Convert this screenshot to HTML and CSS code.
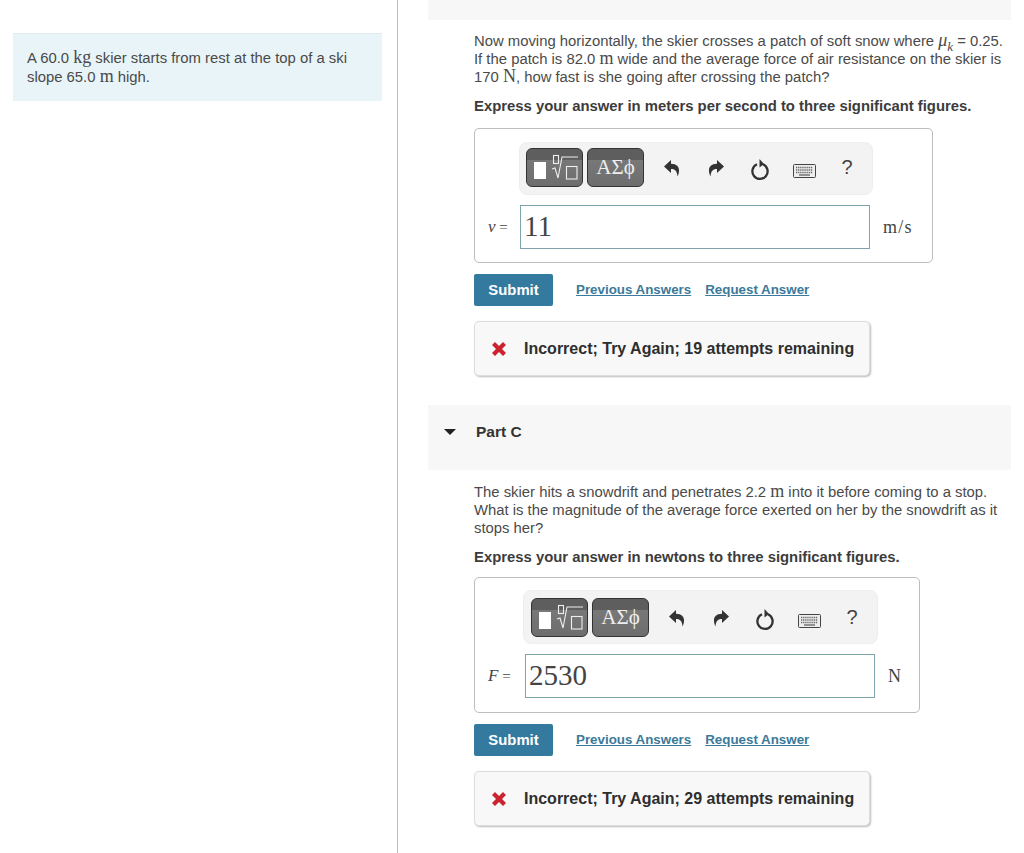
FILE: index.html
```html
<!DOCTYPE html>
<html lang="en">
<head>
  <meta charset="UTF-8" />
  <title>Skier problem</title>
  <link rel="stylesheet" href="styles.css">
</head>
<body>
  <svg class="icon-defs" aria-hidden="true">
    <symbol id="i-undo" viewBox="0 0 16 18"><path d="M7 1 0 7.500 7 14v-4c3.500 0 6 1.200 6.500 7.500C16.500 11 15.500 5 7 4.800z"/></symbol>
    <symbol id="i-redo" viewBox="0 0 16 18"><path d="M9 1l7 6.500L9 14v-4c-3.500 0-6 1.200-6.500 7.500C-.5 11 .5 5 9 4.800z"/></symbol>
    <symbol id="i-reload" viewBox="0 0 20 22"><path d="M13 5.300a7.600 7.600 0 1 1-6 0" fill="none" stroke="#333" stroke-width="2.300"/><path d="M9.500 0l4.500 5-4.500 3.500z" fill="#333"/></symbol>
    <symbol id="i-keys" viewBox="0 0 23 14"><rect x=".5" y=".5" width="22" height="13" rx="1" fill="#eee" stroke="#444"/><path d="M3 3.500h17M3 6h17M3 8.500h17" stroke="#666" stroke-width="1.300" stroke-dasharray="1.300 .8"/><path d="M6 11h11" stroke="#555" stroke-width="1.200"/></symbol>
    <symbol id="i-templates" viewBox="0 0 57 39"><rect x="8" y="14" width="12" height="17" fill="#fff"/><g fill="none" stroke="#eee" stroke-width="1.100"><rect x="27.500" y="7.500" width="5" height="8"/><path d="M26 21l3-1 3 10 4-21h16"/><rect x="40.500" y="18.500" width="10.500" height="12.500"/></g></symbol>
    <symbol id="i-cross" viewBox="0 0 16 16"><path d="M1 4l3-3 4 4 4-4 3 3-4 4 4 4-3 3-4-4-4 4-3-3 4-4z"/></symbol>
  </svg>

  <div class="page">
    <aside class="intro-col">
      <div class="intro">A 60.0 <span class="unit-m">kg</span> skier starts from rest at the top of a ski slope 65.0 <span class="unit-m">m</span> high.</div>
    </aside>

    <main class="parts-col">
      <div class="part-band part-band-top"></div>
      <section class="part-body">
        <p class="question">Now moving horizontally, the skier crosses a patch of soft snow where <i class="mu">μ<sub>k</sub></i> = 0.25. If the patch is 82.0 <span class="unit-m">m</span> wide and the average force of air resistance on the skier is 170 <span class="unit-m">N</span>, how fast is she going after crossing the patch?</p>
        <p class="instruction">Express your answer in meters per second to three significant figures.</p>

        <div class="answer-box box-b">
          <div class="toolbar">
            <button class="tool-btn"><svg width="57" height="39"><use href="#i-templates"/></svg></button>
            <button class="tool-btn tool-greek">ΑΣϕ</button>
            <span class="tool"><svg class="ic-arrow"><use href="#i-undo"/></svg></span>
            <span class="tool"><svg class="ic-arrow"><use href="#i-redo"/></svg></span>
            <span class="tool"><svg class="ic-reload"><use href="#i-reload"/></svg></span>
            <span class="tool"><svg class="ic-keys"><use href="#i-keys"/></svg></span>
            <span class="tool tool-help">?</span>
          </div>
          <div class="answer-row">
            <label class="var"><i>v</i> =</label>
            <input class="answer-input" type="text" value="11" />
            <span class="unit unit-wide">m/s</span>
          </div>
        </div>

        <div class="actions">
          <button class="submit">Submit</button>
          <a class="link link-first" href="#">Previous Answers</a>
          <a class="link" href="#">Request Answer</a>
        </div>
        <div class="feedback">
          <svg class="ic-cross"><use href="#i-cross"/></svg>
          <span>Incorrect; Try Again; 19 attempts remaining</span>
        </div>
      </section>

      <div class="part-band part-band-title">
        <span class="caret"></span>
        <span class="part-title">Part C</span>
      </div>
      <section class="part-body">
        <p class="question question-c">The skier hits a snowdrift and penetrates 2.2 <span class="unit-m">m</span> into it before coming to a stop. What is the magnitude of the average force exerted on her by the snowdrift as it stops her?</p>
        <p class="instruction">Express your answer in newtons to three significant figures.</p>

        <div class="answer-box box-c">
          <div class="toolbar">
            <button class="tool-btn"><svg width="57" height="39"><use href="#i-templates"/></svg></button>
            <button class="tool-btn tool-greek">ΑΣϕ</button>
            <span class="tool"><svg class="ic-arrow"><use href="#i-undo"/></svg></span>
            <span class="tool"><svg class="ic-arrow"><use href="#i-redo"/></svg></span>
            <span class="tool"><svg class="ic-reload"><use href="#i-reload"/></svg></span>
            <span class="tool"><svg class="ic-keys"><use href="#i-keys"/></svg></span>
            <span class="tool tool-help">?</span>
          </div>
          <div class="answer-row">
            <label class="var"><i>F</i> =</label>
            <input class="answer-input" type="text" value="2530" />
            <span class="unit">N</span>
          </div>
        </div>

        <div class="actions">
          <button class="submit">Submit</button>
          <a class="link link-first" href="#">Previous Answers</a>
          <a class="link" href="#">Request Answer</a>
        </div>
        <div class="feedback">
          <svg class="ic-cross"><use href="#i-cross"/></svg>
          <span>Incorrect; Try Again; 29 attempts remaining</span>
        </div>
      </section>
    </main>
  </div>
</body>
</html>
```

FILE: styles.css
```css
* {
  box-sizing: border-box;
}

html, body {
  margin: 0;
  height: 853px;
  overflow: hidden;
  background: #fff;
}

body {
  font-family: "Liberation Sans", Arial, sans-serif;
  font-size: 14.85px;
  color: #4a4a4a;
}

.icon-defs {
  display: none;
}

.page {
  display: flex;
  height: 853px;
}

.intro-col {
  width: 398px;
  flex: none;
  padding: 33px 15px 0 13px;
  border-right: 1px solid #aebfd4;
}

.intro {
  padding: 15px 14px 14px;
  line-height: 19px;
  background: #e8f4f7;
  border-top: 1px solid #dfeaee;
}

.unit-m {
  font-family: "Liberation Serif", serif;
  font-size: 18px;
  line-height: 0;
}

.parts-col {
  width: 583px;
  margin-left: 30px;
  flex: none;
}

.part-band {
  background: #f7f7f7;
}

.part-band-top {
  height: 20px;
}

.part-band-title {
  display: flex;
  align-items: flex-start;
  height: 65px;
  margin-top: 29px;
  padding: 18px 0 0 16px;
}

.caret {
  width: 0;
  height: 0;
  margin: 6px 20px 0 0;
  border-left: 6px solid transparent;
  border-right: 6px solid transparent;
  border-top: 6px solid #222;
}

.part-title {
  font-size: 15.5px;
  font-weight: bold;
  line-height: 18px;
  color: #333;
}

.part-body {
  padding-left: 46px;
}

.question {
  margin: 0;
  padding-top: 12px;
  line-height: 18px;
}

.question-c {
  padding-top: 13px;
}

.mu {
  font-family: "Liberation Serif", serif;
  font-size: 18px;
  line-height: 0;
}

.mu sub {
  font-size: 13px;
  line-height: 0;
}

.instruction {
  margin: 11px 0;
  line-height: 18px;
  font-weight: bold;
  color: #3c3c3c;
}

.answer-box {
  border: 1px solid #bdbdbd;
  border-radius: 5px;
}

.box-b {
  width: 459px;
  margin-top: 13px;
  padding: 13px 0 13px 13px;
}

.box-c {
  width: 446px;
  padding: 12px 0 14px 13px;
}

.toolbar {
  display: flex;
  align-items: flex-start;
  height: 53px;
  padding: 5px 0 0 6px;
  background: #f3f3f3;
  border: 1px solid #eee;
  border-radius: 8px;
}

.box-b .toolbar {
  width: 354px;
  margin-left: 31px;
}

.box-c .toolbar {
  width: 355px;
  height: 54px;
  margin-left: 35px;
  padding: 7px 0 0 7px;
}

.tool-btn {
  width: 57px;
  height: 39px;
  margin-right: 4px;
  padding: 0;
  border: 1px solid #333;
  border-radius: 6px;
  background: linear-gradient(#5e5e5e 0, #5e5e5e 30%, #787878 30%, #6d6d6d 100%);
  overflow: hidden;
}

.tool-btn svg {
  display: block;
  margin: -1px;
}

.tool-greek {
  margin-right: 6px;
  font-family: "Liberation Serif", serif;
  font-size: 21px;
  color: #eee;
}

.tool {
  display: flex;
  align-items: center;
  justify-content: center;
  width: 44px;
  height: 39px;
  fill: #333;
}

.ic-arrow {
  width: 16px;
  height: 18px;
}

.ic-reload {
  width: 20px;
  height: 22px;
  margin-top: 4px;
}

.ic-keys {
  width: 23px;
  height: 14px;
  margin-top: 7px;
}

.tool-help {
  padding-right: 2px;
  font-size: 20px;
  color: #444;
}

.answer-row {
  display: flex;
  align-items: center;
  margin-top: 10px;
}

.var {
  font-family: "Liberation Serif", serif;
  font-size: 15px;
  color: #444;
}

.box-b .var {
  width: 32px;
}

.box-c .var {
  width: 37px;
}

.var i {
  font-size: 17px;
}

.answer-input {
  width: 350px;
  height: 44px;
  padding: 0 3px 2px;
  border: 1px solid #7fa3aa;
  font-family: "Liberation Serif", serif;
  font-size: 29px;
  color: #444;
  background: #fff;
}

.unit {
  margin-left: 13px;
  font-family: "Liberation Serif", serif;
  font-size: 18px;
  color: #444;
}

.unit-wide {
  letter-spacing: 1.300px;
}

.actions {
  display: flex;
  align-items: center;
  margin-top: 11px;
}

.submit {
  width: 79px;
  height: 32px;
  padding: 0;
  border: none;
  border-radius: 2px;
  background: #337a9e;
  color: #fff;
  font-family: "Liberation Sans", Arial, sans-serif;
  font-size: 14.85px;
  font-weight: bold;
}

.link {
  margin-left: 14px;
  padding-bottom: 2px;
  font-size: 13.35px;
  font-weight: bold;
  color: #3b7a9a;
}

.link-first {
  margin-left: 23px;
}

.feedback {
  display: flex;
  align-items: center;
  width: 396px;
  height: 55px;
  margin-top: 15px;
  padding-left: 16px;
  background: #f8f8f8;
  border: 1px solid #ddd;
  border-radius: 5px;
  box-shadow: 1px 1px 2px #bbb;
  font-size: 16px;
  font-weight: bold;
  color: #2e2e2e;
}

.ic-cross {
  width: 16px;
  height: 16px;
  margin-right: 17px;
  fill: #c9242f;
}
```
